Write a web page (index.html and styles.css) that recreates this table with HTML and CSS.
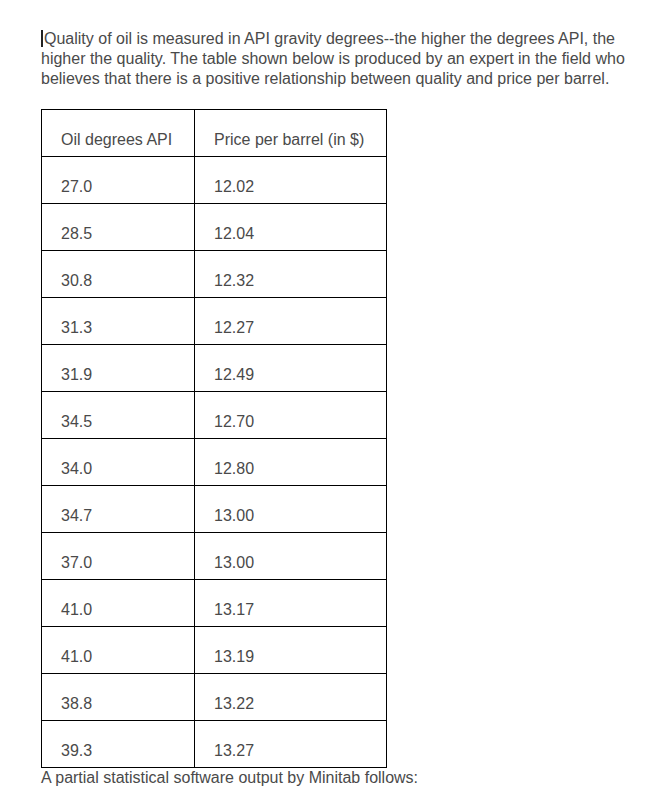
FILE: index.html
```html
<!DOCTYPE html>
<html>
<head>
<meta charset="utf-8">
<link rel="stylesheet" href="styles.css">
</head>
<body>
<div class="page">
<p class="intro"><span class="caret"></span>Quality of oil is measured in API gravity degrees--the higher the degrees API, the higher the quality. The table shown below is produced by an expert in the field who believes that there is a positive relationship between quality and price per barrel.</p>
<table class="data">
<tr><td>Oil degrees API</td><td>Price per barrel (in $)</td></tr>
<tr><td>27.0</td><td>12.02</td></tr>
<tr><td>28.5</td><td>12.04</td></tr>
<tr><td>30.8</td><td>12.32</td></tr>
<tr><td>31.3</td><td>12.27</td></tr>
<tr><td>31.9</td><td>12.49</td></tr>
<tr><td>34.5</td><td>12.70</td></tr>
<tr><td>34.0</td><td>12.80</td></tr>
<tr><td>34.7</td><td>13.00</td></tr>
<tr><td>37.0</td><td>13.00</td></tr>
<tr><td>41.0</td><td>13.17</td></tr>
<tr><td>41.0</td><td>13.19</td></tr>
<tr><td>38.8</td><td>13.22</td></tr>
<tr><td>39.3</td><td>13.27</td></tr>
</table>
<p class="outro">A partial statistical software output by Minitab follows:</p>
</div>
</body>
</html>
```
FILE: styles.css
```css
html, body {
  margin: 0;
  padding: 0;
  background: #fff;
}
.page {
  padding: 29px 20px 0 41px;
  font-family: "Liberation Sans", Arial, sans-serif;
  font-size: 16px;
  line-height: 20px;
  color: #4a4a4a;
}
.intro {
  margin: 0 0 20px 0;
}
.caret {
  display: inline-block;
  width: 2px;
  height: 17px;
  background: #222;
  vertical-align: -3px;
  margin-right: 1px;
}
.data {
  border-collapse: collapse;
  width: 346px;
  table-layout: fixed;
}
.data td {
  border: 1px solid #000;
  padding: 21px 19px 8px 19px;
  height: 17px;
  line-height: 17px;
  font-size: 16px;
  vertical-align: top;
}
.data td:first-child {
  width: 114px;
}
.outro {
  margin: 0;
}
```
